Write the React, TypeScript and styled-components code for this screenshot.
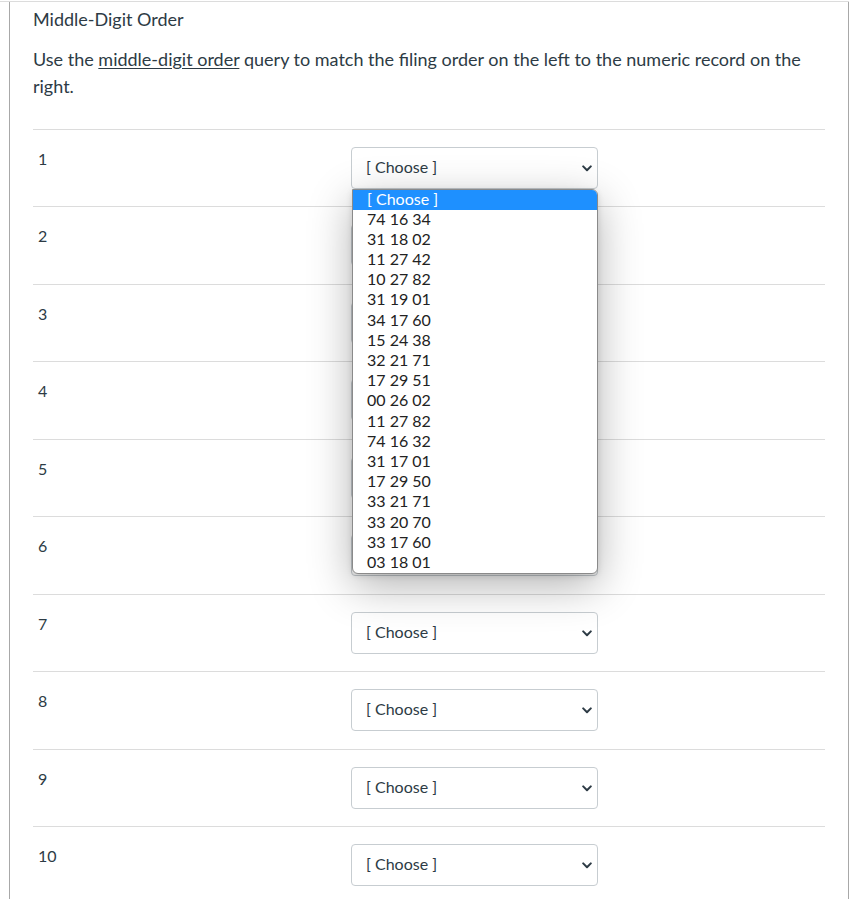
import React from "react";
import styled, { createGlobalStyle } from "styled-components";

const GlobalStyle = createGlobalStyle`
  html, body {
    margin: 0;
    padding: 0;
    background: #ffffff;
  }
  body {
    font-family: Lato, "Noto Sans", "Liberation Sans", sans-serif;
    color: #2d3b45;
  }
`;

const Page = styled.div`
  width: 849px;
  padding-top: 1px;
`;

const TopRule = styled.div`
  border-top: 1px solid #dcdcdc;
`;

const Frame = styled.div`
  margin-left: 9px;
  width: 840px;
  box-sizing: border-box;
  border-left: 1px solid #a8a8a8;
  border-right: 1px solid #a8a8a8;
  padding: 5px 23px 0 23px;
  min-height: 900px;
`;

const Title = styled.div`
  font-size: 18px;
  line-height: 24px;
  color: #2d3b45;
`;

const Prompt = styled.p`
  margin: 15px 0 28.5px 0;
  font-size: 18px;
  line-height: 27px;
  color: #2d3b45;
`;

const Link = styled.span`
  text-decoration: underline;
  text-underline-offset: 2px;
`;

const Row = styled.div`
  display: grid;
  grid-template-columns: 318px 1fr;
  border-top: 1px solid #dcdcdc;
  padding: 17px 0 17.5px 0;
`;

const Num = styled.div`
  font-size: 16px;
  line-height: 24px;
  padding-left: 5px;
  color: #2d3b45;
`;

const SelectWrap = styled.div`
  position: relative;
  width: 247px;
  height: 42px;
`;

const NativeSelect = styled.select`
  appearance: none;
  -webkit-appearance: none;
  width: 100%;
  height: 42px;
  box-sizing: border-box;
  border: 1px solid #c7cdd1;
  border-radius: 4px;
  background: #ffffff;
  padding: 0 24px 3px 14px;
  font-family: Lato, "Noto Sans", "Liberation Sans", sans-serif;
  font-size: 16px;
  color: #2d3b45;
  outline: none;
`;

const Chevron = styled.svg`
  position: absolute;
  right: 6px;
  top: 18px;
  width: 10px;
  height: 7px;
  pointer-events: none;
`;

const Popup = styled.ul`
  position: absolute;
  top: 42px;
  left: 1px;
  width: 246px;
  box-sizing: border-box;
  margin: 0;
  padding: 0;
  list-style: none;
  background: #ffffff;
  border: 1px solid #8a8a8a;
  border-radius: 0 6px 6px 6px;
  box-shadow: 0 12px 44px rgba(0, 0, 0, 0.3), 0 2px 6px rgba(0, 0, 0, 0.12);
  overflow: hidden;
  z-index: 10;
`;

const Option = styled.li<{ $active?: boolean }>`
  height: 18.2px;
  line-height: 18.2px;
  padding: 0 0 2px 14px;
  font-size: 16px;
  color: ${(p) => (p.$active ? "#ffffff" : "#222222")};
  background: ${(p) => (p.$active ? "#1e90ff" : "transparent")};
  white-space: nowrap;
`;

const options = [
  "74 16 34",
  "31 18 02",
  "11 27 42",
  "10 27 82",
  "31 19 01",
  "34 17 60",
  "15 24 38",
  "32 21 71",
  "17 29 51",
  "00 26 02",
  "11 27 82",
  "74 16 32",
  "31 17 01",
  "17 29 50",
  "33 21 71",
  "33 20 70",
  "33 17 60",
  "03 18 01",
];

function ChooseSelect({ open }: { open?: boolean }) {
  return (
    <SelectWrap>
      <NativeSelect defaultValue="">
        <option value="">[ Choose ]</option>
        {options.map((o) => (
          <option key={o} value={o}>
            {o}
          </option>
        ))}
      </NativeSelect>
      <Chevron viewBox="0 0 10 7">
        <polyline
          points="1.2,1.4 5,5.2 8.8,1.4"
          fill="none"
          stroke="#2d3b45"
          strokeWidth="2"
          strokeLinecap="round"
          strokeLinejoin="round"
        />
      </Chevron>
      {open && (
        <Popup>
          <Option $active>[ Choose ]</Option>
          {options.map((o) => (
            <Option key={o}>{o}</Option>
          ))}
        </Popup>
      )}
    </SelectWrap>
  );
}

export default function App() {
  const rows = Array.from({ length: 10 }, (_, i) => i + 1);
  return (
    <>
      <GlobalStyle />
      <Page>
        <TopRule />
        <Frame>
          <Title>Middle-Digit Order</Title>
          <Prompt>
            Use the <Link>middle-digit order</Link> query to match the filing
            order on the left to the numeric record on the right.
          </Prompt>
          {rows.map((n) => (
            <Row key={n}>
              <Num>{n}</Num>
              <ChooseSelect open={n === 1} />
            </Row>
          ))}
        </Frame>
      </Page>
    </>
  );
}
